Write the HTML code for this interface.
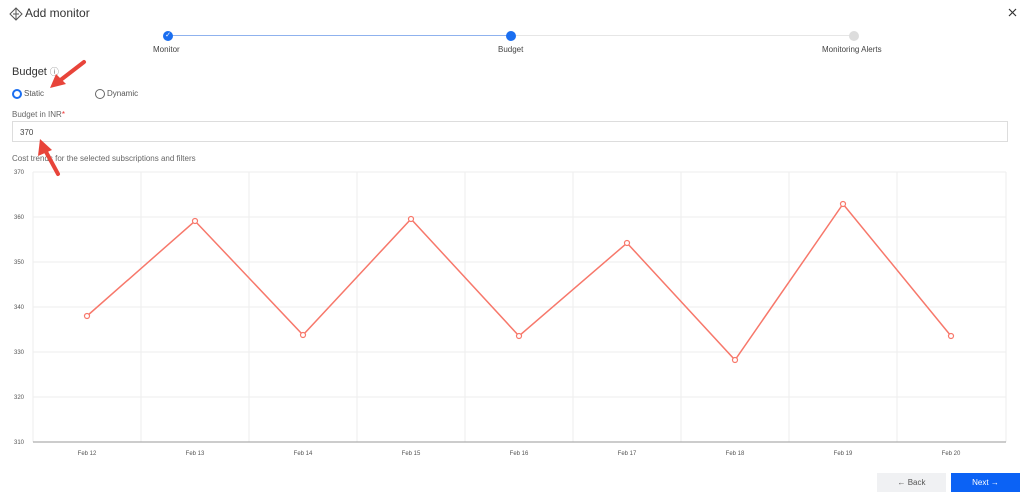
<!DOCTYPE html>
<html><head><meta charset="utf-8"><style>
body{margin:0;width:1024px;height:496px;background:#fff;font-family:"Liberation Sans",sans-serif;position:relative;overflow:hidden;color:#333}
.a{position:absolute}
</style></head><body>
<svg class="a" style="left:9px;top:7px" width="14" height="14" viewBox="0 0 14 14"><path d="M7 1L13 7L7 13L1 7Z M7 1V13 M4 7h6" fill="none" stroke="#555" stroke-width="1"/></svg>
<div class="a" style="left:25px;top:6px;font-size:12px;color:#333">Add monitor</div>
<svg class="a" style="left:1008px;top:8px" width="9" height="9" viewBox="0 0 9 9"><path d="M1 1L8 8M8 1L1 8" stroke="#333" stroke-width="1.2"/></svg>
<div class="a" style="left:168px;top:35px;width:343px;height:1px;background:#8fb2ee"></div>
<div class="a" style="left:511px;top:35px;width:343px;height:1px;background:#e6e6e6"></div>
<div class="a" style="left:163px;top:31px;width:10px;height:10px;border-radius:50%;background:#1a6ef0;color:#fff;font-size:7px;line-height:10px;text-align:center">✓</div>
<div class="a" style="left:506px;top:31px;width:10px;height:10px;border-radius:50%;background:#1a6ef0"></div>
<div class="a" style="left:849px;top:31px;width:10px;height:10px;border-radius:50%;background:#ddd"></div>
<div class="a" style="left:153px;top:45px;font-size:8px;color:#444">Monitor</div>
<div class="a" style="left:498px;top:45px;font-size:8px;color:#444">Budget</div>
<div class="a" style="left:822px;top:45px;font-size:8px;color:#444">Monitoring Alerts</div>
<div class="a" style="left:12px;top:65px;font-size:11px;color:#333">Budget <span style="font-size:9px;color:#777">ⓘ</span></div>
<div class="a" style="left:12px;top:89px;width:6px;height:6px;border:2px solid #1a6ef0;border-radius:50%"></div>
<div class="a" style="left:24px;top:89px;font-size:8px;color:#555">Static</div>
<div class="a" style="left:95px;top:89px;width:8px;height:8px;border:1px solid #666;border-radius:50%"></div>
<div class="a" style="left:107px;top:89px;font-size:8px;color:#555">Dynamic</div>
<div class="a" style="left:12px;top:110px;font-size:8px;color:#666">Budget in INR<span style="color:#e33">*</span></div>
<div class="a" style="left:12px;top:121px;width:996px;height:21px;border:1px solid #ddd;box-sizing:border-box"></div>
<div class="a" style="left:20px;top:128px;font-size:8px;color:#444">370</div>
<div class="a" style="left:12px;top:154px;font-size:8px;color:#666">Cost trends for the selected subscriptions and filters</div>
<svg class="a" style="left:0;top:0" width="1024" height="496">
<g stroke="#eee" stroke-width="1">
<line x1="33" y1="172" x2="1006" y2="172"/><line x1="33" y1="217" x2="1006" y2="217"/><line x1="33" y1="262" x2="1006" y2="262"/><line x1="33" y1="307" x2="1006" y2="307"/><line x1="33" y1="352" x2="1006" y2="352"/><line x1="33" y1="397" x2="1006" y2="397"/>
<line x1="33" y1="172" x2="33" y2="442"/><line x1="141" y1="172" x2="141" y2="442"/><line x1="249" y1="172" x2="249" y2="442"/><line x1="357" y1="172" x2="357" y2="442"/><line x1="465" y1="172" x2="465" y2="442"/><line x1="573" y1="172" x2="573" y2="442"/><line x1="681" y1="172" x2="681" y2="442"/><line x1="789" y1="172" x2="789" y2="442"/><line x1="897" y1="172" x2="897" y2="442"/><line x1="1006" y1="172" x2="1006" y2="442"/>
</g>
<line x1="33" y1="442" x2="1006" y2="442" stroke="#999"/>
<g font-size="6" fill="#555" font-family="Liberation Sans">
<text x="14" y="174">370</text><text x="14" y="219">360</text><text x="14" y="264">350</text><text x="14" y="309">340</text><text x="14" y="354">330</text><text x="14" y="399">320</text><text x="14" y="444">310</text>
<g text-anchor="middle"><text x="87" y="455">Feb 12</text><text x="195" y="455">Feb 13</text><text x="303" y="455">Feb 14</text><text x="411" y="455">Feb 15</text><text x="519" y="455">Feb 16</text><text x="627" y="455">Feb 17</text><text x="735" y="455">Feb 18</text><text x="843" y="455">Feb 19</text><text x="951" y="455">Feb 20</text></g>
</g>
<polyline fill="none" stroke="#f7786b" stroke-width="1.5" points="87,316 195,221 303,335 411,219 519,336 627,243 735,360 843,204 951,336"/>
<g fill="#fff" stroke="#f7786b" stroke-width="1.2">
<circle cx="87" cy="316" r="2.5"/><circle cx="195" cy="221" r="2.5"/><circle cx="303" cy="335" r="2.5"/><circle cx="411" cy="219" r="2.5"/><circle cx="519" cy="336" r="2.5"/><circle cx="627" cy="243" r="2.5"/><circle cx="735" cy="360" r="2.5"/><circle cx="843" cy="204" r="2.5"/><circle cx="951" cy="336" r="2.5"/>
</g>
<path d="M84 62 L58 82" stroke="#e8443a" stroke-width="4" stroke-linecap="round"/><path d="M50 88 L56 74 L66 84Z" fill="#e8443a"/>
<path d="M58 174 L45 150" stroke="#e8443a" stroke-width="4" stroke-linecap="round"/><path d="M40 139 L38 156 L52 150Z" fill="#e8443a"/>
</svg>
<div class="a" style="left:877px;top:473px;width:69px;height:19px;background:#f0f1f3;font-size:8px;color:#555;text-align:center;line-height:19px">← Back</div>
<div class="a" style="left:951px;top:473px;width:69px;height:19px;background:#0b62f5;font-size:8px;color:#fff;text-align:center;line-height:19px">Next →</div>
</body></html>
